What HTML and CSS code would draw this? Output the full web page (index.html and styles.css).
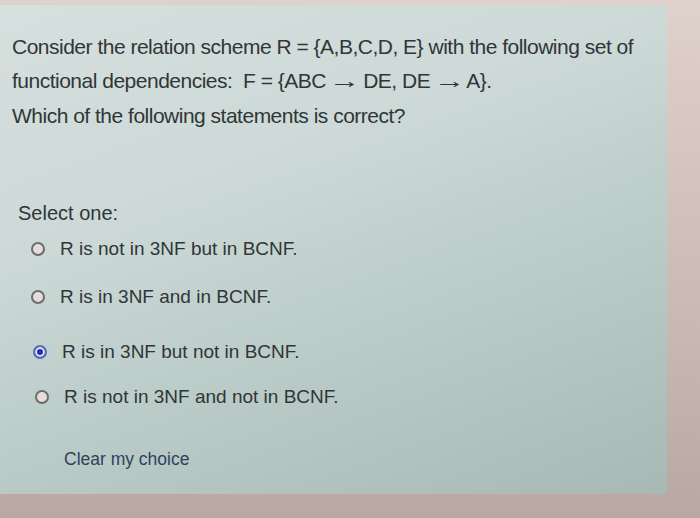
FILE: index.html
```html
<!DOCTYPE html>
<html>
<head>
<meta charset="utf-8">
<link rel="stylesheet" href="styles.css">
</head>
<body>
<div class="screen">
  <div class="panel">
    <div class="qtext">
      <p class="line">Consider the relation scheme R = {A,B,C,D, E} with the following set of</p>
      <p class="line">functional dependencies:&nbsp; F = {ABC <span class="arr">&rarr;</span> DE, DE <span class="arr">&rarr;</span> A}.</p>
      <p class="line">Which of the following statements is correct?</p>
    </div>
    <div class="answer">
      <div class="prompt">Select one:</div>
      <div class="opts">
        <div class="opt o1"><span class="radio"></span><span class="label">R is not in 3NF but in BCNF.</span></div>
        <div class="opt o2"><span class="radio"></span><span class="label">R is in 3NF and in BCNF.</span></div>
        <div class="opt o3"><span class="radio checked"></span><span class="label">R is in 3NF but not in BCNF.</span></div>
        <div class="opt o4"><span class="radio"></span><span class="label">R is not in 3NF and not in BCNF.</span></div>
      </div>
      <div class="clear">Clear my choice</div>
    </div>
  </div>
</div>
</body>
</html>
```
FILE: styles.css
```css
html, body {
  margin: 0;
  padding: 0;
}
body {
  width: 700px;
  height: 518px;
  overflow: hidden;
  background: linear-gradient(180deg, #dfd1cb 0%, #cbbab3 60%, #b9a8a1 100%);
  font-family: "Liberation Sans", Arial, sans-serif;
  color: #303637;
}
.screen {
  padding: 5px 33px 0 0;
  height: 513px;
}
.panel {
  height: 489px;
  background: linear-gradient(160deg, #d6e0de 0%, #ccd9d7 35%, #b9cac7 65%, #a7b8b5 100%);
  box-sizing: border-box;
  padding: 24.5px 0 0 12px;
}
.qtext .line {
  margin: 0;
  font-size: 21px;
  line-height: 34.5px;
  letter-spacing: -0.5px;
}
.arr {
  display: inline-block;
  transform: scaleX(1.5);
  margin: 0 3px;
}
.answer {
  padding: 68px 0 0 6px;
}
.prompt {
  font-size: 20px;
  line-height: 24px;
}
.opts {
  padding-left: 13px;
}
.opt {
  display: flex;
  align-items: center;
  gap: 15px;
  font-size: 19px;
  letter-spacing: 0;
  height: 24px;
}
.o1 { margin-top: 12px; }
.o2 { margin-top: 24px; }
.o3 { margin-top: 31px; padding-left: 2px; }
.o4 { margin-top: 21px; padding-left: 4px; }
.radio {
  width: 10px;
  height: 10px;
  border-radius: 50%;
  border: 2px solid #6a6d6d;
  background: #e8dcd8;
  flex: none;
}
.radio.checked {
  border: 2px solid #5a6fa8;
  background: #1b2fd0;
  box-shadow: inset 0 0 0 2px #e6e8f2;
}
.clear {
  margin: 40px 0 0 46px;
  font-size: 17.5px;
  letter-spacing: 0;
  color: #2c4360;
}
```
